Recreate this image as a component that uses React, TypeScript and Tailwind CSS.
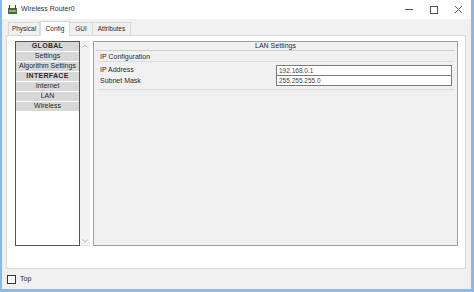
import React from "react";

const items = [
  { label: "GLOBAL", header: true },
  { label: "Settings" },
  { label: "Algorithm Settings" },
  { label: "INTERFACE", header: true },
  { label: "Internet" },
  { label: "LAN" },
  { label: "Wireless" },
];

export default function App() {
  return (
    <div
      className="w-[474px] h-[292px] bg-[#f0f0f0] border-l-2 border-r-[3px] border-b-[3px] border-[#86b9ec] flex flex-col overflow-hidden text-[#2a2a2a]"
      style={{ fontFamily: '"Liberation Sans", Arial, sans-serif' }}
    >
      {/* title bar */}
      <div className="h-[19px] bg-white flex items-center shrink-0">
        <div className="ml-[6px] w-[9px] h-[9px]">
          <svg width="9" height="9" viewBox="0 0 9 9">
            <rect x="0" y="3" width="9" height="6" fill="#4a6b3a" />
            <rect x="1" y="0" width="1" height="4" fill="#2c4a22" />
            <rect x="7" y="0" width="1" height="4" fill="#2c4a22" />
            <rect x="1" y="5" width="7" height="2" fill="#8fb07a" />
          </svg>
        </div>
        <span className="ml-[4px] text-[7px] text-[#333]">Wireless Router0</span>
        <div className="ml-auto flex items-center h-full">
          <div className="w-[25px] flex justify-center">
            <div className="w-[8px] h-px bg-[#555]" />
          </div>
          <div className="w-[25px] flex justify-center">
            <div className="w-[8px] h-[8px] border border-[#555]" />
          </div>
          <div className="w-[25px] flex justify-center">
            <svg width="9" height="9" viewBox="0 0 9 9">
              <path d="M1 1 L8 8 M8 1 L1 8" stroke="#555" strokeWidth="1" />
            </svg>
          </div>
        </div>
      </div>

      {/* tabs */}
      <div className="flex items-end h-[16px] pl-[6px] shrink-0 text-[6.5px]">
        <div className="w-[32px] h-[13px] flex items-center justify-center border border-b-0 border-[#d9d9d9] bg-[#f0f0f0]">Physical</div>
        <div className="w-[30px] h-[15px] flex items-center justify-center border border-b-0 border-[#d9d9d9] bg-white -mb-px relative z-10">Config</div>
        <div className="w-[23px] h-[13px] flex items-center justify-center border border-b-0 border-l-0 border-[#d9d9d9] bg-[#f0f0f0]">GUI</div>
        <div className="w-[38px] h-[13px] flex items-center justify-center border border-b-0 border-l-0 border-[#d9d9d9] bg-[#f0f0f0]">Attributes</div>
      </div>

      {/* content */}
      <div className="ml-[4px] mr-[5px] h-[234px] bg-white border border-[#d9d9d9] flex pt-[5px] pl-[8px] pr-[7px] shrink-0">
        {/* list */}
        <div className="w-[65px] h-[205px] border border-[#555] bg-white flex flex-col text-[7px]">
          {items.map((it) => (
            <div
              key={it.label}
              className={`h-[10px] flex items-center justify-center bg-[#d7d7d7] border-b border-white ${it.header ? "font-bold tracking-[0.3px]" : ""}`}
            >
              {it.label}
            </div>
          ))}
        </div>
        {/* scrollbar */}
        <div className="w-[10px] h-[205px] bg-[#f2f2f2] flex flex-col items-center justify-between py-[2px] border-y border-[#e6e6e6]">
          <svg width="6" height="4" viewBox="0 0 6 4"><path d="M0.5 3.5 L3 1 L5.5 3.5" stroke="#b8b8b8" fill="none" /></svg>
          <svg width="6" height="4" viewBox="0 0 6 4"><path d="M0.5 0.5 L3 3 L5.5 0.5" stroke="#b8b8b8" fill="none" /></svg>
        </div>
        {/* right panel */}
        <div className="ml-[3px] flex-1 h-[205px] border border-[#a0a0a0] bg-[#f0f0f0] flex flex-col text-[7px]">
          <div className="h-[8px] flex items-center justify-center border-b border-[#d0d0d0] mx-[2px] mt-px">LAN Settings</div>
          <div className="px-[3px]">
            <div className="h-[8px] mt-[2px] flex items-center pl-[3px]">IP Configuration</div>
            <div className="border-t border-b border-[#dcdcdc] pl-[3px] pr-[2px] pt-[3px] pb-[3px]">
              <div className="flex items-center h-[11px]">
                <span className="w-[176px]">IP Address</span>
                <div className="flex-1 h-[11px] bg-white border border-[#7a7a7a] flex items-center px-[2px] text-[6.5px] text-[#444]">192.168.0.1</div>
              </div>
              <div className="flex items-center h-[10px]">
                <span className="w-[176px]">Subnet Mask</span>
                <div className="flex-1 h-[10px] bg-white border border-[#7a7a7a] border-t-0 flex items-center px-[2px] text-[6.5px] text-[#444]">255.255.255.0</div>
              </div>
            </div>
          </div>
        </div>
      </div>

      {/* bottom bar */}
      <div className="flex-1 flex items-center pl-[5px] text-[7px]">
        <div className="w-[9px] h-[9px] border border-[#333] bg-white" />
        <span className="ml-[4px]">Top</span>
      </div>
    </div>
  );
}
